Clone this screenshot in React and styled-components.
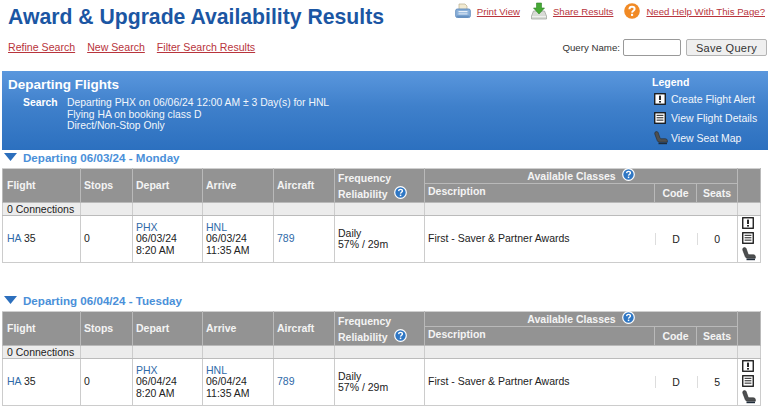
import React from "react";
import styled, { createGlobalStyle } from "styled-components";

const GlobalStyle = createGlobalStyle`
  html, body { margin: 0; padding: 0; background: #fff; }
  body { font-family: "Liberation Sans", Arial, sans-serif; color: #222; overflow: hidden; }
`;

const Page = styled.div`
  width: 768px;
  height: 411px;
  overflow: hidden;
`;

const TopBar = styled.div`
  display: flex;
  justify-content: space-between;
  height: 71px;
`;

const TitleBlock = styled.div`
  padding: 4px 0 0 8px;
`;

const Title = styled.h1`
  margin: 0;
  font-size: 21.2px;
  line-height: 26px;
  font-weight: bold;
  color: #1b56a3;
`;

const LinkRow = styled.div`
  display: flex;
  gap: 12px;
  margin-top: 11px;
`;

const RedLink = styled.a`
  font-size: 10.6px;
  line-height: 13px;
  color: #b8343c;
  text-decoration: underline;
`;

const ToolBlock = styled.div`
  display: flex;
  flex-direction: column;
  align-items: flex-end;
  padding: 3px 1px 0 0;
`;

const ToolRow = styled.div`
  display: flex;
  align-items: center;
  height: 16px;
`;

const ToolLink = styled(RedLink)`
  margin: 0 11px 0 6px;
  font-size: 9.65px;
  &:last-child { margin-right: 2px; }
`;

const QueryRow = styled.div`
  display: flex;
  align-items: center;
  margin-top: 20px;
`;

const QueryLabel = styled.label`
  font-size: 9.7px;
  color: #333;
  margin-right: 3px;
`;

const QueryInput = styled.input`
  box-sizing: border-box;
  width: 58px;
  height: 17px;
  border: 1px solid #999;
  border-radius: 2px;
  margin: 0 5px 0 0;
  background: #fff;
`;

const QueryButton = styled.button`
  box-sizing: border-box;
  width: 81px;
  height: 17px;
  padding: 0;
  border: 1px solid #b4b4b4;
  border-radius: 2px;
  background: #efefef;
  color: #333;
  font-family: "Liberation Sans", Arial, sans-serif;
  font-size: 11px;
  letter-spacing: 0.3px;
`;

const Banner = styled.section`
  display: flex;
  justify-content: space-between;
  box-sizing: border-box;
  height: 79px;
  margin-left: 2px;
  padding: 6px 0 0 6px;
  background: linear-gradient(#5a97dd, #3f80cb 45%, #2c70bf);
  color: #f2f6fb;
`;

const BannerTitle = styled.h2`
  margin: 0;
  font-size: 13.5px;
  line-height: 16px;
  font-weight: bold;
  color: #fff;
`;

const SearchInfo = styled.div`
  display: flex;
  margin: 4px 0 0 15px;
  font-size: 10.35px;
  line-height: 11.5px;
`;

const SearchLabel = styled.b`
  width: 44px;
  color: #fff;
`;

const Legend = styled.div`
  width: 116px;
  font-size: 10.5px;
`;

const LegendTitle = styled.b`
  display: block;
  line-height: 11px;
  color: #fff;
`;

const LegendRow = styled.div`
  display: flex;
  align-items: center;
  height: 19.5px;
  margin-left: 2px;
  &:first-of-type { margin-top: 1px; }
`;

const LegendIcon = styled.span`
  display: flex;
  flex: none;
  width: 17px;
`;

const DayHeading = styled.h3`
  display: flex;
  align-items: center;
  gap: 6px;
  box-sizing: border-box;
  height: 18px;
  margin: 0 0 0 4px;
  padding-bottom: 4px;
  font-size: 11.6px;
  font-weight: bold;
  color: #4a90d9;
`;

const DaySection = styled.section`
  & + & { margin-top: 30px; }
`;

const FlightTable = styled.table`
  table-layout: fixed;
  border-collapse: collapse;
  width: 758px;
  margin-left: 2px;
  font-size: 10.5px;
`;

const HeadRow = styled.tr`
  height: ${(p) => p.$h}px;
`;

const Th = styled.th`
  box-sizing: border-box;
  padding: ${(p) => p.$pad || "0 3px"};
  background: #939393;
  border: 1px solid #b9b9b9;
  border-top-color: #cfcfcf;
  color: #f4f4f4;
  font-size: 10.5px;
  font-weight: bold;
  text-align: ${(p) => p.$align || "left"};
  vertical-align: ${(p) => p.$valign || "middle"};
  line-height: ${(p) => p.$lh || 15}px;
  white-space: nowrap;
`;

const HelpWrap = styled.span`
  display: inline-block;
  height: 10px;
  line-height: 0;
  vertical-align: -1px;
  margin-left: ${(p) => p.$gap}px;
  svg { margin-top: -2px; }
`;

const ConnRow = styled.tr`
  height: 13px;
  background: #ececec;
`;

const ConnCell = styled.td`
  padding: 0 4px;
  border: 1px solid #ccc;
  border-bottom-color: #bbb;
  font-size: 10.5px;
  line-height: 12px;
  color: #222;
  white-space: nowrap;
`;

const BodyRow = styled.tr`
  height: 47px;
`;

const Td = styled.td`
  padding: ${(p) => p.$pad || "0 3px"};
  border: 1px solid #ccc;
  border-left-width: ${(p) => (p.$noLeft ? 0 : 1)}px;
  border-right-width: ${(p) => (p.$noRight ? 0 : 1)}px;
  line-height: 11.5px;
  color: #222;
  vertical-align: middle;
  white-space: nowrap;
`;

const BlueLink = styled.a`
  color: #2f6aa8;
`;

const Marked = styled.span`
  display: block;
  border-left: 1px solid #ddd;
  text-align: center;
  line-height: 12px;
`;

const ActionStack = styled.div`
  display: flex;
  flex-direction: column;
  align-items: flex-start;
  gap: 3px;
  padding-left: 4px;
`;

const Triangle = () => (
  <svg width="13" height="8" viewBox="0 0 13 8">
    <path d="M0 0H13L6.5 8Z" fill="#2c6fbd" />
  </svg>
);

const HelpBlue = () => (
  <svg width="13" height="13" viewBox="0 0 13 13">
    <circle cx="6.5" cy="6.5" r="5.8" fill="#2f77c4" stroke="#fff" strokeWidth="1.2" />
    <path d="M4.6 5.1C4.7 3.9 5.5 3.4 6.5 3.4 7.6 3.4 8.4 4 8.4 5 8.4 6.2 6.6 6.2 6.5 7.6" fill="none" stroke="#fff" strokeWidth="1.4" />
    <rect x="5.8" y="8.6" width="1.5" height="1.5" fill="#fff" />
  </svg>
);

const HelpOrange = () => (
  <svg width="16" height="16" viewBox="0 0 16 16">
    <circle cx="8" cy="8" r="7.8" fill="#f18a25" />
    <path d="M5.4 6.2C5.5 4.5 6.6 3.8 8 3.8 9.5 3.8 10.6 4.6 10.6 6 10.6 7.7 8.2 7.7 8.1 9.6" fill="none" stroke="#fff" strokeWidth="2" />
    <rect x="7" y="10.8" width="2.1" height="2.1" fill="#fff" />
  </svg>
);

const PrintIcon = () => (
  <svg width="16" height="16" viewBox="0 0 16 16">
    <path d="M4 1H10L12 3V8H4Z" fill="#f1ead2" stroke="#b9b08f" strokeWidth="0.7" />
    <rect x="0.7" y="6" width="14.6" height="8.5" rx="1.6" fill="#8db2da" stroke="#4f7fb5" strokeWidth="0.8" />
    <rect x="3.5" y="8.2" width="9" height="1" fill="#fff" />
    <rect x="3.5" y="10.4" width="9" height="1" fill="#e6eef7" />
    <rect x="2" y="12.6" width="12" height="1.2" fill="#5d8abd" />
  </svg>
);

const ShareIcon = () => (
  <svg width="16" height="18" viewBox="0 0 16 18">
    <path d="M2.5 9H13.5L15.5 14V17H0.5V14Z" fill="#d8dbd6" stroke="#9a9e98" strokeWidth="0.7" />
    <rect x="1" y="14" width="14" height="0.8" fill="#f5f5f5" />
    <path d="M5.5 1H10.5V6H13.5L8 12 2.5 6H5.5Z" fill="#46a935" stroke="#2f8426" strokeWidth="0.6" />
  </svg>
);

const AlertIcon = () => (
  <svg width="12" height="12" viewBox="0 0 12 12">
    <rect x="0.75" y="0.75" width="10.5" height="10.5" fill="#fff" stroke="#111" strokeWidth="1.3" />
    <rect x="5.1" y="2.6" width="1.8" height="4.4" fill="#111" />
    <rect x="5.1" y="8" width="1.8" height="1.6" fill="#111" />
  </svg>
);

const DetailsIcon = () => (
  <svg width="12" height="12" viewBox="0 0 12 12">
    <rect x="0.75" y="0.75" width="10.5" height="10.5" fill="#fff" stroke="#111" strokeWidth="1.3" />
    <rect x="2.6" y="2.8" width="6.8" height="1.1" fill="#333" />
    <rect x="2.6" y="5.2" width="6.8" height="1.1" fill="#333" />
    <rect x="2.6" y="7.6" width="6.8" height="1.1" fill="#333" />
  </svg>
);

const SeatIcon = () => (
  <svg width="14" height="14" viewBox="0 0 14 14">
    <path d="M1 1.2C2 .3 3.6.4 4.1 1.4L6 6.8C6.3 7.5 6.8 7.7 7.5 7.7H11.2C12.6 7.7 13.4 8.6 13.4 9.8V11.2H5.4C4.4 11.2 3.7 10.7 3.3 9.8L.9 3.4C.6 2.6.6 1.7 1 1.2Z" fill="#4d4f50" stroke="#222" strokeWidth="0.5" />
    <rect x="4.5" y="11.6" width="8.5" height="1.6" fill="#1f2c3a" />
  </svg>
);

const COLUMNS = [78, 52, 70, 71, 61, 90, 230, 42, 41, 23];

const DAYS = [
  { heading: "Departing 06/03/24 - Monday", date: "06/03/24", seats: 0 },
  { heading: "Departing 06/04/24 - Tuesday", date: "06/04/24", seats: 5 },
];

function DayTable({ day }) {
  return (
    <DaySection>
      <DayHeading>
        <Triangle />
        {day.heading}
      </DayHeading>
      <FlightTable>
        <colgroup>
          {COLUMNS.map((w, i) => (
            <col key={i} width={w} />
          ))}
        </colgroup>
        <thead>
          <HeadRow $h={15}>
            <Th rowSpan={2} $pad="0 4px">Flight</Th>
            <Th rowSpan={2}>Stops</Th>
            <Th rowSpan={2}>Depart</Th>
            <Th rowSpan={2}>Arrive</Th>
            <Th rowSpan={2}>Aircraft</Th>
            <Th rowSpan={2} $lh={16}>
              Frequency
              <br />
              Reliability
              <HelpWrap $gap={6}>
                <HelpBlue />
              </HelpWrap>
            </Th>
            <Th colSpan={3} $align="center" $lh={13}>
              Available Classes
              <HelpWrap $gap={6}>
                <HelpBlue />
              </HelpWrap>
            </Th>
            <Th rowSpan={2} />
          </HeadRow>
          <HeadRow $h={19}>
            <Th $valign="top">Description</Th>
            <Th $align="center" $pad="0">Code</Th>
            <Th $align="center" $pad="0">Seats</Th>
          </HeadRow>
        </thead>
        <tbody>
          <ConnRow>
            <ConnCell>0 Connections</ConnCell>
            <ConnCell />
            <ConnCell />
            <ConnCell />
            <ConnCell />
            <ConnCell />
            <ConnCell colSpan={3} />
            <ConnCell />
          </ConnRow>
          <BodyRow>
            <Td $pad="0 4px">
              <BlueLink>HA</BlueLink> 35
            </Td>
            <Td>0</Td>
            <Td>
              <BlueLink>PHX</BlueLink>
              <br />
              {day.date}
              <br />
              8:20 AM
            </Td>
            <Td>
              <BlueLink>HNL</BlueLink>
              <br />
              {day.date}
              <br />
              11:35 AM
            </Td>
            <Td>
              <BlueLink>789</BlueLink>
            </Td>
            <Td>
              Daily
              <br />
              57% / 29m
            </Td>
            <Td $noRight>First - Saver &amp; Partner Awards</Td>
            <Td $pad="0" $noLeft $noRight>
              <Marked>D</Marked>
            </Td>
            <Td $pad="0" $noLeft $noRight>
              <Marked>{day.seats}</Marked>
            </Td>
            <Td $pad="0">
              <ActionStack>
                <AlertIcon />
                <DetailsIcon />
                <SeatIcon />
              </ActionStack>
            </Td>
          </BodyRow>
        </tbody>
      </FlightTable>
    </DaySection>
  );
}

export default function App() {
  return (
    <Page>
      <GlobalStyle />
      <TopBar>
        <TitleBlock>
          <Title>Award &amp; Upgrade Availability Results</Title>
          <LinkRow>
            <RedLink>Refine Search</RedLink>
            <RedLink>New Search</RedLink>
            <RedLink>Filter Search Results</RedLink>
          </LinkRow>
        </TitleBlock>
        <ToolBlock>
          <ToolRow>
            <PrintIcon />
            <ToolLink>Print View</ToolLink>
            <ShareIcon />
            <ToolLink>Share Results</ToolLink>
            <HelpOrange />
            <ToolLink>Need Help With This Page?</ToolLink>
          </ToolRow>
          <QueryRow>
            <QueryLabel>Query Name:</QueryLabel>
            <QueryInput />
            <QueryButton>Save Query</QueryButton>
          </QueryRow>
        </ToolBlock>
      </TopBar>
      <Banner>
        <div>
          <BannerTitle>Departing Flights</BannerTitle>
          <SearchInfo>
            <SearchLabel>Search</SearchLabel>
            <div>
              Departing PHX on 06/06/24 12:00 AM ± 3 Day(s) for HNL
              <br />
              Flying HA on booking class D
              <br />
              Direct/Non-Stop Only
            </div>
          </SearchInfo>
        </div>
        <Legend>
          <LegendTitle>Legend</LegendTitle>
          <LegendRow>
            <LegendIcon><AlertIcon /></LegendIcon>
            Create Flight Alert
          </LegendRow>
          <LegendRow>
            <LegendIcon><DetailsIcon /></LegendIcon>
            View Flight Details
          </LegendRow>
          <LegendRow>
            <LegendIcon><SeatIcon /></LegendIcon>
            View Seat Map
          </LegendRow>
        </Legend>
      </Banner>
      {DAYS.map((d) => (
        <DayTable key={d.date} day={d} />
      ))}
    </Page>
  );
}
